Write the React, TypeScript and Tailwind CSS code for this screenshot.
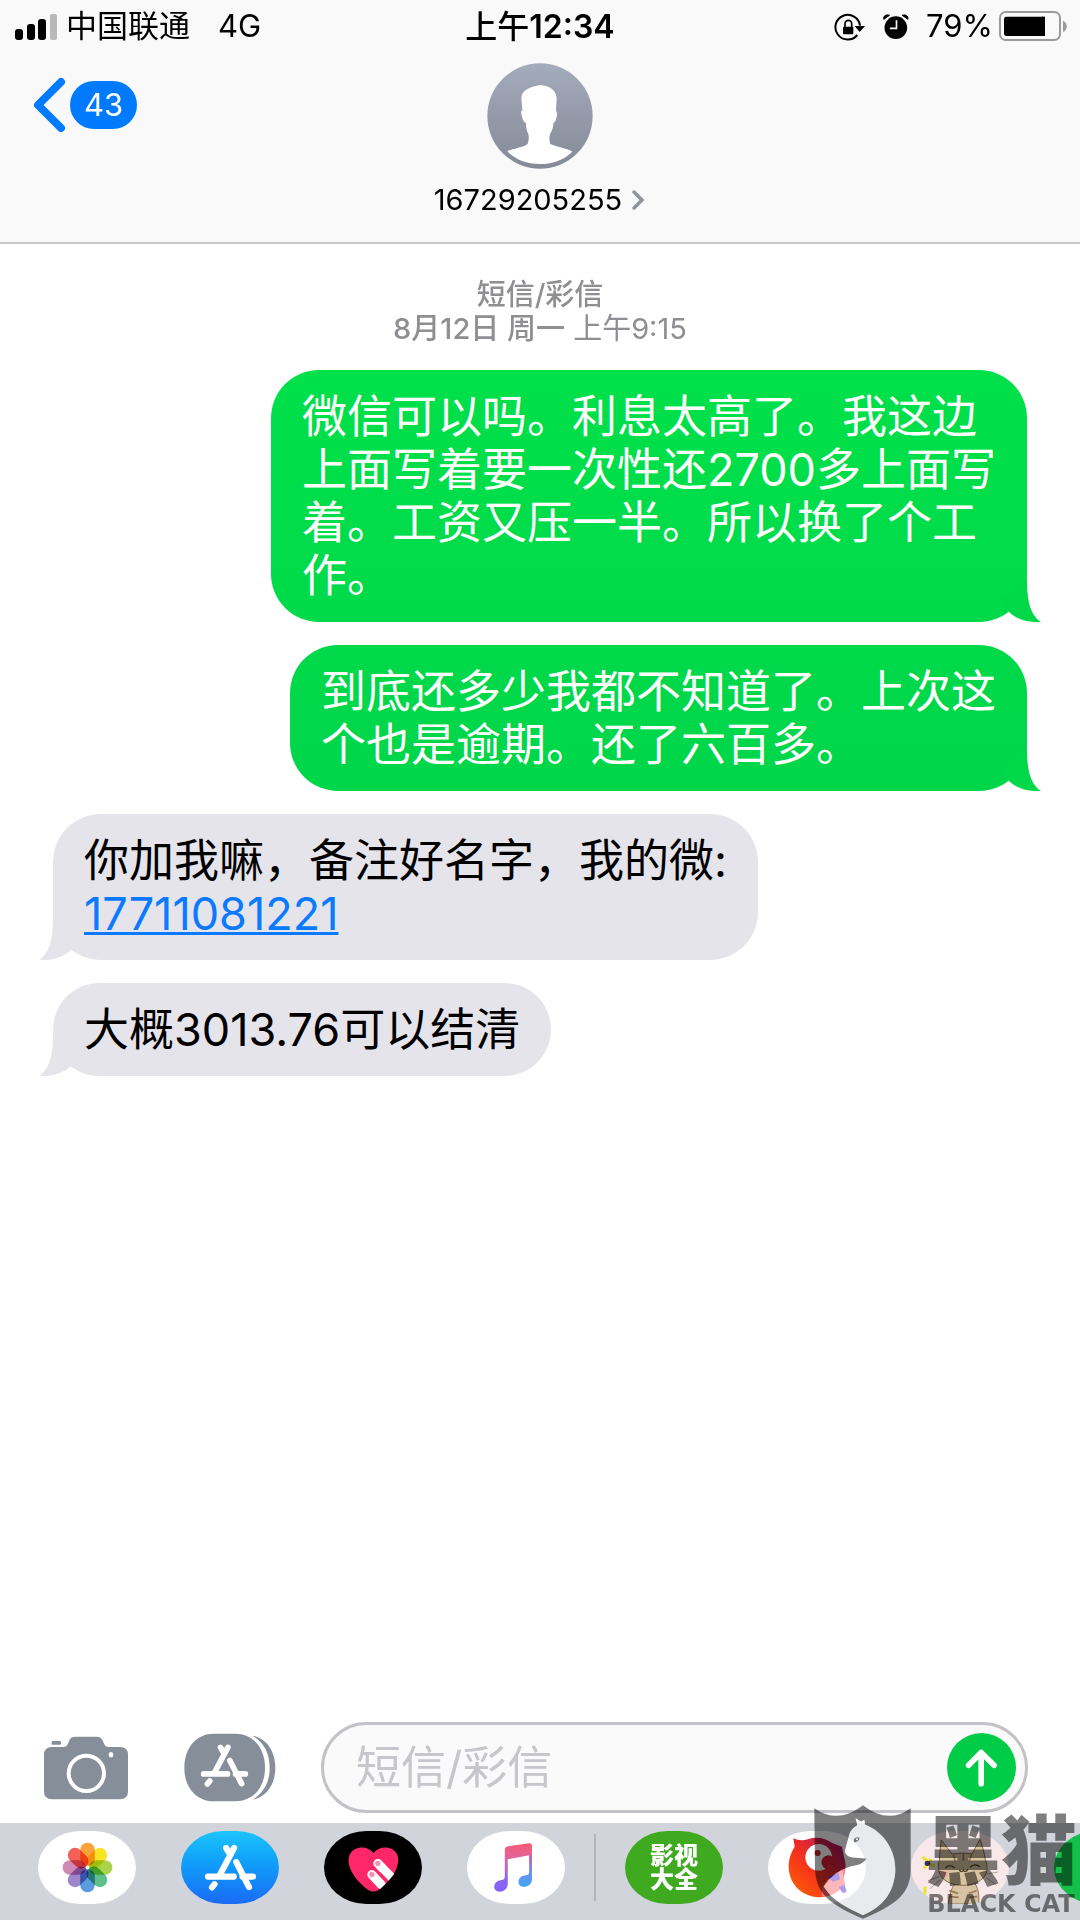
import { useState } from 'react'
import type { ReactNode } from 'react'

type Message = {
  id: number
  from: 'me' | 'them'
  text: string
}

const messages: Message[] = [
  { id: 1, from: 'me', text: '微信可以吗。利息太高了。我这边\n上面写着要一次性还2700多上面写\n着。工资又压一半。所以换了个工\n作。' },
  { id: 2, from: 'me', text: '到底还多少我都不知道了。上次这\n个也是逾期。还了六百多。' },
  { id: 3, from: 'them', text: '你加我嘛，备注好名字，我的微:\n17711081221' },
  { id: 4, from: 'them', text: '大概3013.76可以结清' },
]

// Phone numbers become links
function renderText(text: string) {
  return text.split(/(\d{11})/).map((part, i) => {
    if (/^\d{11}$/.test(part)) {
      return (
        <a key={i} href={`tel:${part}`} className="text-[#0a7aff] underline decoration-3 underline-offset-2">
          {part}
        </a>
      )
    }
    return part
  })
}

function Bubble({ message }: { message: Message }) {
  const mine = message.from === 'me'
  return (
    <li className={`flex ${mine ? 'justify-end' : 'justify-start'}`}>
      <div
        className={`relative rounded-[48px] px-[31px] py-5 ${
          mine ? 'bg-linear-to-b from-[#00e04a] from-20% to-[#00d64a] to-40% bg-fixed text-white' : 'bg-[#e5e4eb] text-black'
        }`}
      >
        <p className="text-[45px] leading-[53px] whitespace-pre-line">{renderText(message.text)}</p>
        <svg
          viewBox="0 0 60 44"
          className={`absolute bottom-0 h-11 w-[60px] ${
            mine ? '-right-3.5 text-[#00d84a]' : '-left-3.5 -scale-x-100 text-[#e5e4eb]'
          }`}
          fill="currentColor"
        >
          <path d="M46 0C46 20 48 36 60 44C48 44.500 36 42 28 34L20 24Z" />
        </svg>
      </div>
    </li>
  )
}

function StatusBar() {
  return (
    <div className="grid h-[53px] grid-cols-[1fr_auto_1fr] items-center px-3 text-[31px]">
      <div className="flex items-center">
        <svg viewBox="0 0 48 28" className="h-7 w-12">
          <rect x="3" y="16" width="8" height="11" rx="3" />
          <rect x="15" y="11" width="8" height="16" rx="3" />
          <rect x="26" y="6" width="8" height="21" rx="3" />
          <rect x="38" y="1" width="7" height="26" rx="2" fill="#b9b9b9" />
        </svg>
        <span className="ml-1.5">中国联通</span>
        <span className="ml-7">4G</span>
      </div>
      <div className="text-[32px]">
        <span className="font-medium">上午</span>
        <span className="font-semibold">12:34</span>
      </div>
      <div className="flex items-center justify-end">
        <svg viewBox="354 36 96 84" className="h-7 w-8">
          <path d="M424 102A37 37 0 1 1 432 74" fill="none" stroke="#000" strokeWidth="6" />
          <path d="M416 75H447L431 93Z" />
          <rect x="381" y="77" width="31" height="23" rx="3" />
          <path d="M387 79V68a10 10 0 0 1 20 0V79" fill="none" stroke="#000" strokeWidth="5" />
        </svg>
        <svg viewBox="495 36 81 84" className="ml-4 h-7 w-7">
          <circle cx="535" cy="80" r="34" />
          <path d="M499 55C496 45 506 39 516 43ZM571 55C574 45 564 39 554 43Z" stroke="#000" strokeWidth="3" strokeLinejoin="round" />
          <path d="M537 58V82H517" fill="none" stroke="#f9f9f9" strokeWidth="5" />
        </svg>
        <span className="ml-4">79%</span>
        <svg viewBox="837 33 207 93" className="ml-1.5 h-[31px] w-[69px]">
          <rect x="840" y="36" width="180" height="84" rx="17" fill="none" stroke="#9a9a9a" strokeWidth="6" />
          <rect x="852" y="50" width="123" height="58" rx="7" />
          <rect x="965" y="50" width="10" height="58" />
          <path d="M1029 62C1044 68 1044 90 1029 96Z" fill="#9a9a9a" />
        </svg>
      </div>
    </div>
  )
}

function Header() {
  return (
    <header className="border-b-2 border-[#c8c8ca] bg-[#f9f9f9]">
      <StatusBar />
      <div className="grid grid-cols-[1fr_auto_1fr] items-start pb-[25px]">
        <button className="mt-[23px] ml-8 flex items-center justify-self-start" aria-label="返回">
          <svg viewBox="0 0 36 58" className="h-[58px] w-9">
            <path d="M29 6L6 29L29 52" fill="none" stroke="#007aff" strokeWidth="8" strokeLinecap="round" strokeLinejoin="round" />
          </svg>
          <span className="ml-0.5 flex h-12 w-[67px] items-center justify-center rounded-full bg-[#007aff] text-[31px] text-white">43</span>
        </button>
        <div className="flex flex-col items-center pt-2.5">
          <svg viewBox="381 187 318 318" className="size-[106px]">
            <defs>
              <linearGradient id="avatar" x1="0" y1="0" x2="0" y2="1">
                <stop offset="0" stopColor="#a4abbc" />
                <stop offset="1" stopColor="#858a96" />
              </linearGradient>
            </defs>
            <circle cx="540" cy="346" r="158" fill="url(#avatar)" />
            <path
              fill="#fff"
              d="M540 253C556 253 588 262 590 292L588 331C594 331 590 364 580 367C580 384 574 394 570 400C567 412 568 422 571 430C590 439 625 444 637 453C610 480 575 490 540 490C500 490 465 477 442 451C458 445 488 440 503 430C507 420 507 408 505 400C501 393 498 382 498 367C488 366 482 336 484 331L487 331L484 292C485 265 515 259 540 253Z"
            />
          </svg>
          <a href="#contact" className="mt-3.5 flex items-center gap-2 text-[29px] leading-[34px]">
            16729205255
            <svg viewBox="0 0 16 24" className="h-6 w-4">
              <path d="M4 4L12 12L4 20" fill="none" stroke="#8f939e" strokeWidth="3.500" strokeLinecap="round" />
            </svg>
          </a>
        </div>
      </div>
    </header>
  )
}

function AppStoreMark({ className }: { className: string }) {
  return (
    <svg viewBox="600 125 146 134" className={className} fill="none" stroke="currentColor" strokeWidth="17" strokeLinecap="round">
      <path d="M661 138L668 150" />
      <path d="M683 138L645 210" />
      <path d="M629 238L622 247" />
      <path d="M611 217H682M706 217H735" />
      <path d="M689 177L724 246" />
    </svg>
  )
}

function Compose() {
  const [draft, setDraft] = useState('')
  return (
    <form className="flex items-center pr-[52px] pb-2.5 pl-11" onSubmit={e => e.preventDefault()}>
      <button type="button" aria-label="相机">
        <svg viewBox="132 102 252 192" className="h-16 w-[84px]">
          <path
            fill="#858e99"
            d="M156 135H190C200 135 202 130 207 118C210 108 216 104 226 104H290C300 104 305 108 309 118C314 130 316 135 326 135H360Q384 135 384 159V268Q384 292 360 292H156Q132 292 132 268V159Q132 135 156 135Z"
          />
          <rect x="155" y="117" width="28" height="11" rx="3" fill="#858e99" />
          <circle cx="259" cy="214" r="53" fill="none" stroke="#fff" strokeWidth="12" />
          <ellipse cx="333" cy="158" rx="7" ry="8" fill="#fff" />
        </svg>
      </button>
      <button type="button" aria-label="应用" className="relative ml-14">
        <svg viewBox="551 94 276 207" className="h-[69px] w-[92px]">
          <path
            fill="#858e99"
            d="M552 198C552 136 590 96 640 96H705C756 96 794 136 794 198C794 260 756 299 705 299H640C590 299 552 260 552 198Z"
          />
          <path fill="#858e99" d="M757 102C800 110 825 150 825 198C825 246 800 286 757 294C792 272 808 240 808 198C808 156 792 124 757 102Z" />
        </svg>
        <AppStoreMark className="absolute top-2.5 left-4 h-[45px] w-[49px] text-white" />
      </button>
      <div className="ml-[45px] flex h-[91px] min-w-0 flex-1 items-center rounded-full border-3 border-[#c2c2c7] bg-[#fafafa] pr-[9px] pl-8">
        <input
          aria-label="短信/彩信"
          placeholder="短信/彩信"
          value={draft}
          onChange={e => setDraft(e.target.value)}
          className="min-w-0 flex-1 bg-transparent text-[45px] outline-none placeholder:text-[#c6c6cb]"
        />
        <button aria-label="发送" className="size-[69px] rounded-full bg-[#00cc47]">
          <svg viewBox="440 93 208 208" className="size-full">
            <path d="M543 246V155M505 190L543 152L582 190" fill="none" stroke="#fff" strokeWidth="17" strokeLinecap="round" strokeLinejoin="round" />
          </svg>
        </button>
      </div>
    </form>
  )
}

function DrawerApp({ label, className, children }: { label: string; className: string; children?: ReactNode }) {
  return (
    <button
      aria-label={label}
      className={`flex h-[73px] w-[98px] shrink-0 items-center justify-center overflow-hidden rounded-[43px/37px] ${className}`}
    >
      {children}
    </button>
  )
}

const petals = ['#f9a33a', '#f7e525', '#a8d34a', '#5fc08b', '#5a9bdd', '#9d86cb', '#d088b6', '#f4605a']

function Drawer() {
  return (
    <nav className="flex items-center gap-[45px] overflow-hidden bg-[#d1d4da] pt-2 pb-4 pl-[38px]">
      <DrawerApp label="照片" className="bg-white">
        <svg viewBox="-80 -80 160 160" className="size-[53px]">
          {petals.map((color, i) => (
            <rect key={color} x="-22" y="-75" width="44" height="70" rx="22" fill={color} transform={`rotate(${i * 45})`} className="mix-blend-multiply" />
          ))}
        </svg>
      </DrawerApp>
      <DrawerApp label="App Store" className="bg-linear-to-b from-[#1dc4fa] to-[#1c6af5]">
        <AppStoreMark className="h-[49px] w-[53px] text-white" />
      </DrawerApp>
      <DrawerApp label="Digital Touch" className="bg-black">
        <svg viewBox="144 442 152 140" className="mt-1 h-[47px] w-[51px]">
          <path fill="#ff2768" d="M220 463C236 440 278 440 291 468C304 500 270 550 234 574Q220 581 206 574C168 548 134 500 149 468C162 440 204 440 220 463Z" />
          <path d="M233 494L271 533" stroke="#fff" strokeWidth="27" strokeLinecap="round" />
          <path d="M215 527L243 557" stroke="#fff" strokeWidth="27" strokeLinecap="round" />
          <path d="M238 521L262 546" stroke="#ff2768" strokeWidth="5" />
          <path d="M300 500L280 528Q262 552 236 574L250 590L310 580Z" fill="#000" />
          <circle cx="233" cy="494" r="8" fill="#ff90b4" />
          <circle cx="215" cy="527" r="8" fill="#ff90b4" />
        </svg>
      </DrawerApp>
      <DrawerApp label="音乐" className="bg-white">
        <svg viewBox="580 426 122 154" className="-ml-1.5 h-[51px] w-10">
          <defs>
            <linearGradient id="music" x1="0" y1="0" x2="0" y2="1">
              <stop offset="0" stopColor="#fb5c74" />
              <stop offset="0.350" stopColor="#d864a4" />
              <stop offset="0.700" stopColor="#8a68ee" />
              <stop offset="1" stopColor="#8560fb" />
            </linearGradient>
            <linearGradient id="musicRight" x1="0" y1="0" x2="0" y2="1">
              <stop offset="0" stopColor="#d460a0" />
              <stop offset="0.500" stopColor="#7590e8" />
              <stop offset="1" stopColor="#3fa5f5" />
            </linearGradient>
          </defs>
          <path fill="url(#music)" d="M616 450Q616 440 626 438L690 429Q699 428 699 437V464L625 478V552C625 568 613 577 600 577C588 577 583 568 584 560C585 548 596 542 607 541C614 540 616 537 616 530Z" />
          <path fill="url(#musicRight)" d="M690 464H699V538C699 554 686 562 673 562C662 562 657 554 658 546C659 534 668 528 680 527C688 526 690 524 690 516Z" />
        </svg>
      </DrawerApp>
      <div className="-mx-4 h-[67px] w-[2px] shrink-0 bg-[#b3b5ba]" />
      <DrawerApp label="影视大全" className="bg-[#3fa91f]">
        <span className="text-2xl leading-6 font-black text-white">
          影视
          <br />
          大全
        </span>
      </DrawerApp>
      <DrawerApp label="鹦鹉" className="bg-white">
        <svg viewBox="500 393 294 219" className="size-full">
          <defs>
            <linearGradient id="bird" x1="0" y1="1" x2="1" y2="0">
              <stop offset="0" stopColor="#ff6a00" />
              <stop offset="0.450" stopColor="#f5301c" />
              <stop offset="1" stopColor="#a80f72" />
            </linearGradient>
          </defs>
          <path fill="url(#bird)" d="M576 415Q598 426 622 417Q660 405 694 430L722 440L728 470C745 520 715 590 655 592C595 590 560 545 562 495C563 470 574 450 580 440Z" />
          <circle cx="652" cy="472" r="40" fill="#fff" />
          <circle cx="649" cy="459" r="9" fill="#cf1f2c" />
          <path fill="#d41c35" d="M665 474C685 450 716 484 698 502C690 492 680 490 678 510C664 504 654 486 665 474Z" />
          <path fill="#ff6d70" d="M664 560Q680 526 722 510L732 555Q700 590 660 590Z" />
          <path fill="#5f3bd0" d="M682 530L712 518L716 538L694 546ZM712 560L730 555L736 575L724 580Z" />
        </svg>
      </DrawerApp>
      <DrawerApp label="猫咪" className="bg-[#f8e8ea]">
        <svg viewBox="333 393 294 219" className="size-full">
          <path d="M445 612C450 575 456 560 470 545H520C535 560 538 585 536 612Z" fill="#d8c4a4" stroke="#8a7354" strokeWidth="3" />
          <path d="M424 420L456 462Q490 456 516 462L540 418Q552 450 556 478C572 520 550 552 490 556C430 556 406 520 418 482Q420 445 424 420Z" fill="#d9c4a0" stroke="#806a4c" strokeWidth="3" />
          <path d="M460 464L466 484M490 460V482M514 464L508 484M448 572L474 580M450 590L476 592M530 572L506 580M532 590L508 592" stroke="#967b56" strokeWidth="5" fill="none" />
          <path d="M436 504Q450 490 464 504M510 502Q524 488 540 500M478 510Q485 520 490 510Q496 520 504 508" stroke="#4b3b2b" strokeWidth="4" fill="none" />
          <path d="M418 530L384 542M420 540L390 566M560 522L594 516M560 534L590 556" stroke="#907d65" strokeWidth="2" />
          <circle cx="432" cy="522" r="10" fill="#f1a7a0" />
          <path d="M368 470L385 488L372 505M392 476L386 492L404 498M376 560L374 586" stroke="#e9e62c" strokeWidth="9" fill="none" />
          <circle cx="382" cy="490" r="8" fill="#3d2866" />
        </svg>
      </DrawerApp>
      <DrawerApp label="更多" className="bg-[#12c04a]" />
    </nav>
  )
}

function BrandStamp() {
  return (
    <div className="pointer-events-none absolute right-0 bottom-0 flex items-end text-black/50">
      <svg viewBox="30 310 300 350" className="h-[117px] w-[100px]">
        <path
          fill="currentColor"
          fillRule="evenodd"
          d="M34 325Q105 375 180 316Q255 375 323 325V510C323 590 265 620 180 657C95 620 40 590 36 510ZM158 355L163 376Q140 388 136 415L126 452Q126 468 145 472Q170 474 190 476Q184 494 142 500Q90 516 62 560C90 605 130 622 180 646C240 620 272 580 277 515C280 450 240 395 186 374L184 360L174 366Z"
        />
        <path
          fill="#fff"
          fillOpacity="0.500"
          d="M158 355L163 376Q140 388 136 415L126 452Q126 468 145 472Q170 474 190 476Q184 494 142 500Q90 516 62 560C90 605 130 622 180 646C240 620 272 580 277 515C280 450 240 395 186 374L184 360L174 366Z"
        />
        <path d="M152 420Q158 408 170 414Q166 428 154 427Z" fill="#6f7275" />
        <circle cx="162" cy="418" r="3" fill="#fff" />
      </svg>
      <div className="flex flex-col items-center pr-[3px] pl-3">
        <span className="text-[76px] leading-[74px] font-black">黑猫</span>
        <span className="font-['DejaVu_Sans',sans-serif] text-2xl leading-8 font-bold">BLACK CAT</span>
      </div>
    </div>
  )
}

function App() {
  return (
    <div lang="zh-CN" className="relative flex min-h-screen flex-col overflow-hidden bg-white font-['Inter','Noto_Sans_CJK_SC',sans-serif] text-black">
      <Header />

      {/* Conversation */}
      <main className="flex-1 pt-[34px]">
        <div className="text-center text-[29px] leading-[34px] text-[#8e8e93]">
          <p className="font-medium">短信/彩信</p>
          <p>
            <span className="font-medium">8月12日 周一</span> 上午9:15
          </p>
        </div>
        <ul className="mt-6 flex flex-col gap-[23px] pr-[53px] pl-[53px]">
          {messages.map(message => (
            <Bubble key={message.id} message={message} />
          ))}
        </ul>
      </main>

      {/* Compose bar and app drawer */}
      <footer>
        <Compose />
        <Drawer />
      </footer>

      <BrandStamp />
    </div>
  )
}

export default App
